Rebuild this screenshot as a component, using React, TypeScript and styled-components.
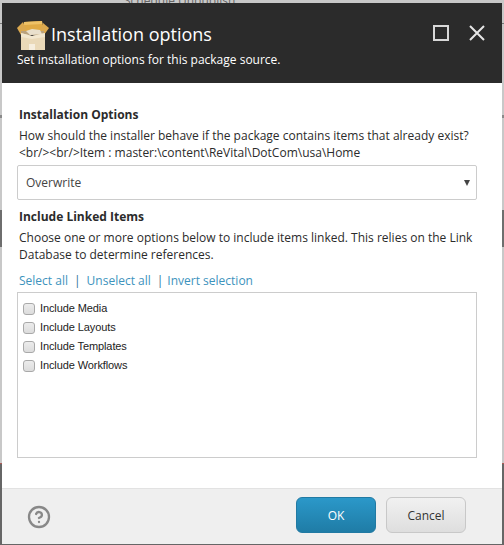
import React from "react";
import styled, { createGlobalStyle } from "styled-components";
import { CircleHelp } from "lucide-react";

const Global = createGlobalStyle`
  html, body { margin: 0; padding: 0; }
  body { font-family: "Open Sans", "Noto Sans", sans-serif; overflow: hidden; }
`;

const Page = styled.div`
  width: 504px;
  height: 545px;
  box-sizing: border-box;
  padding: 0 2px 1px 2px;
  display: flex;
  flex-direction: column;
  background: linear-gradient(
    to bottom,
    #c8c8c8 0,
    #c8c8c8 23px,
    #777 23px,
    #777 24px,
    #c8c8c8 24px,
    #c8c8c8 115px,
    #8a8a8a 115px,
    #8a8a8a 118px,
    #c8c8c8 118px,
    #c8c8c8 210px,
    #6e6e6e 210px,
    #6e6e6e 247px,
    #c8c8c8 247px,
    #c8c8c8 463px,
    #b05a55 463px,
    #b05a55 464px,
    #666 464px,
    #666 100%
  );
`;

const BehindStrip = styled.div`
  height: 3px;
  flex: none;
  overflow: hidden;
  padding-left: 122px;
  font-size: 12px;
  line-height: 16px;
  color: #666;
  white-space: nowrap;
`;

const BehindText = styled.div`
  margin-top: -7px;
`;

const Dialog = styled.div`
  flex: 1;
  min-height: 0;
  display: flex;
  flex-direction: column;
  background: #fff;
`;

const Header = styled.header`
  height: 80px;
  flex: none;
  box-sizing: border-box;
  background: #2b2b2b;
  padding: 17px 15px 0 15px;
  color: #fff;
  display: flex;
  justify-content: space-between;
`;

const HeaderText = styled.div`
  display: flex;
  flex-direction: column;
`;

const TitleRow = styled.div`
  display: flex;
  align-items: center;
  height: 30px;
`;

const Title = styled.h1`
  margin: 0 0 2px 2px;
  font-size: 18px;
  font-weight: 400;
  line-height: 28px;
`;

const Subtitle = styled.div`
  font-size: 12px;
  font-weight: 400;
  line-height: 18px;
  margin-top: 1px;
`;

const WindowControls = styled.div`
  display: flex;
  gap: 20px;
  padding: 5px 2px 0 0;
`;

const Body = styled.main`
  flex: 1;
  min-height: 0;
  box-sizing: border-box;
  padding: 23px 25px 30px 15px;
  display: flex;
  flex-direction: column;
`;

const SectionTitle = styled.h2<{ $spaced?: boolean }>`
  margin: ${(p) => (p.$spaced ? "8px" : "0")} 0 0 2px;
  font-size: 12px;
  font-weight: 700;
  line-height: 18px;
  color: #2b2b2b;
`;

const Help = styled.p`
  margin: 3px 0 0 2px;
  font-size: 12px;
  line-height: 17px;
  color: #2b2b2b;
  white-space: nowrap;
`;

const SelectBox = styled.div`
  margin: 4px 0 0 0;
  height: 35px;
  flex: none;
  box-sizing: border-box;
  border: 1px solid #ccc;
  border-radius: 2px;
  padding: 0 6px 0 8px;
  display: flex;
  align-items: center;
  justify-content: space-between;
  font-size: 12px;
  color: #444;
`;

const Arrow = styled.span`
  width: 0;
  height: 0;
  border-left: 3px solid transparent;
  border-right: 3px solid transparent;
  border-top: 6px solid #444;
`;

const LinksRow = styled.div`
  margin: 9px 0 0 2px;
  display: flex;
  align-items: center;
  font-size: 12px;
  line-height: 18px;
  height: 18px;
`;

const TextLink = styled.a`
  color: #3d93bd;
  text-decoration: none;
`;

const Sep = styled.span<{ $tight?: boolean }>`
  color: #2b6f96;
  margin: ${(p) => (p.$tight ? "0 4px 0 6px" : "0 6px 0 6px")};
`;

const ListBox = styled.div`
  margin-top: 2px;
  flex: 1;
  border: 1px solid #ccc;
  box-sizing: border-box;
  padding: 5px 0 0 5px;
  display: flex;
  flex-direction: column;
`;

const Row = styled.label`
  display: flex;
  align-items: center;
  height: 19px;
  font-family: "Liberation Sans", Arial, sans-serif;
  font-size: 11px;
  letter-spacing: -0.1px;
  color: #222;
`;

const Check = styled.span`
  width: 10px;
  height: 10px;
  margin: 3px 5px 0 0;
  border: 1px solid #a9a9a9;
  border-radius: 3px;
  background: linear-gradient(#ececec, #dcdcdc);
  flex: none;
`;

const Footer = styled.footer`
  height: 56px;
  flex: none;
  box-sizing: border-box;
  background: #efefef;
  border-top: 1px solid #e2e2e2;
  padding: 8px 36px 0 25px;
  display: flex;
  align-items: flex-start;
`;

const HelpIcon = styled.span`
  display: flex;
  margin-top: 8px;
  color: #888;
  margin-right: auto;
`;

const Button = styled.button<{ $primary?: boolean }>`
  width: 80px;
  height: 36px;
  margin-left: ${(p) => (p.$primary ? "0" : "10px")};
  box-sizing: border-box;
  border-radius: 6px;
  font-family: inherit;
  font-size: 12px;
  border: 1px solid ${(p) => (p.$primary ? "#217aa3" : "#c8c8c8")};
  color: ${(p) => (p.$primary ? "#fff" : "#333")};
  background: ${(p) =>
    p.$primary
      ? "linear-gradient(#2b98c9, #1f7ca6)"
      : "linear-gradient(#f1f1f1, #dedede)"};
`;

const PackageIcon = () => (
  <svg width="32" height="30" viewBox="0 0 32 30" style={{ flex: "none" }}>
    <path d="M7 2 L25 1 L26 12 L7 12 Z" fill="#e0aa45" />
    <path d="M7 2 L25 1 L25.5 4 L7 5 Z" fill="#efc267" />
    <path d="M0 8 L6 2 L10 11 L4 15 Z" fill="#dca94f" />
    <path d="M26 3 L32 8 L27 15 L23 10 Z" fill="#dca94f" />
    <path d="M4 11 L27 11 L27 15 L4 15 Z" fill="#b9a27e" />
    <path d="M9 11 L15 9 L23 10 L25 14 L13 15 Z" fill="#e9e0cd" />
    <path d="M4 13 L15 16 L28 13 L28 30 L4 30 Z" fill="#ead9b8" />
    <path d="M4 13 L15 16 L28 13 L28 17 L15 19 L4 17 Z" fill="#f2e7cf" />
    <rect x="12" y="24" width="6" height="6" fill="#f6eede" />
  </svg>
);

const MaxIcon = () => (
  <svg width="16" height="16" viewBox="0 0 16 16">
    <rect x="1" y="1" width="14" height="14" fill="none" stroke="#d8d8d8" strokeWidth="2" />
  </svg>
);

const CloseIcon = () => (
  <svg width="16" height="16" viewBox="0 0 16 16">
    <path d="M1 1 L15 15 M15 1 L1 15" fill="none" stroke="#e6e6e6" strokeWidth="2" />
  </svg>
);

export default function App() {
  return (
    <Page>
      <Global />
      <BehindStrip>
        <BehindText>Schedule Unpublish</BehindText>
      </BehindStrip>
      <Dialog>
        <Header>
          <HeaderText>
            <TitleRow>
              <PackageIcon />
              <Title>Installation options</Title>
            </TitleRow>
            <Subtitle>Set installation options for this package source.</Subtitle>
          </HeaderText>
          <WindowControls>
            <MaxIcon />
            <CloseIcon />
          </WindowControls>
        </Header>
        <Body>
          <SectionTitle>Installation Options</SectionTitle>
          <Help>
            How should the installer behave if the package contains items that already exist?
            <br />
            {"<br/><br/>Item : master:\\content\\ReVital\\DotCom\\usa\\Home"}
          </Help>
          <SelectBox>
            Overwrite
            <Arrow />
          </SelectBox>
          <SectionTitle $spaced>Include Linked Items</SectionTitle>
          <Help>
            Choose one or more options below to include items linked. This relies on the Link
            <br />
            Database to determine references.
          </Help>
          <LinksRow>
            <TextLink>Select all</TextLink>
            <Sep>|</Sep>
            <TextLink>Unselect all</TextLink>
            <Sep $tight>|</Sep>
            <TextLink>Invert selection</TextLink>
          </LinksRow>
          <ListBox>
            {["Include Media", "Include Layouts", "Include Templates", "Include Workflows"].map((l) => (
              <Row key={l}>
                <Check />
                {l}
              </Row>
            ))}
          </ListBox>
        </Body>
        <Footer>
          <HelpIcon>
            <CircleHelp size={24} strokeWidth={2.3} />
          </HelpIcon>
          <Button $primary>OK</Button>
          <Button>Cancel</Button>
        </Footer>
      </Dialog>
    </Page>
  );
}
